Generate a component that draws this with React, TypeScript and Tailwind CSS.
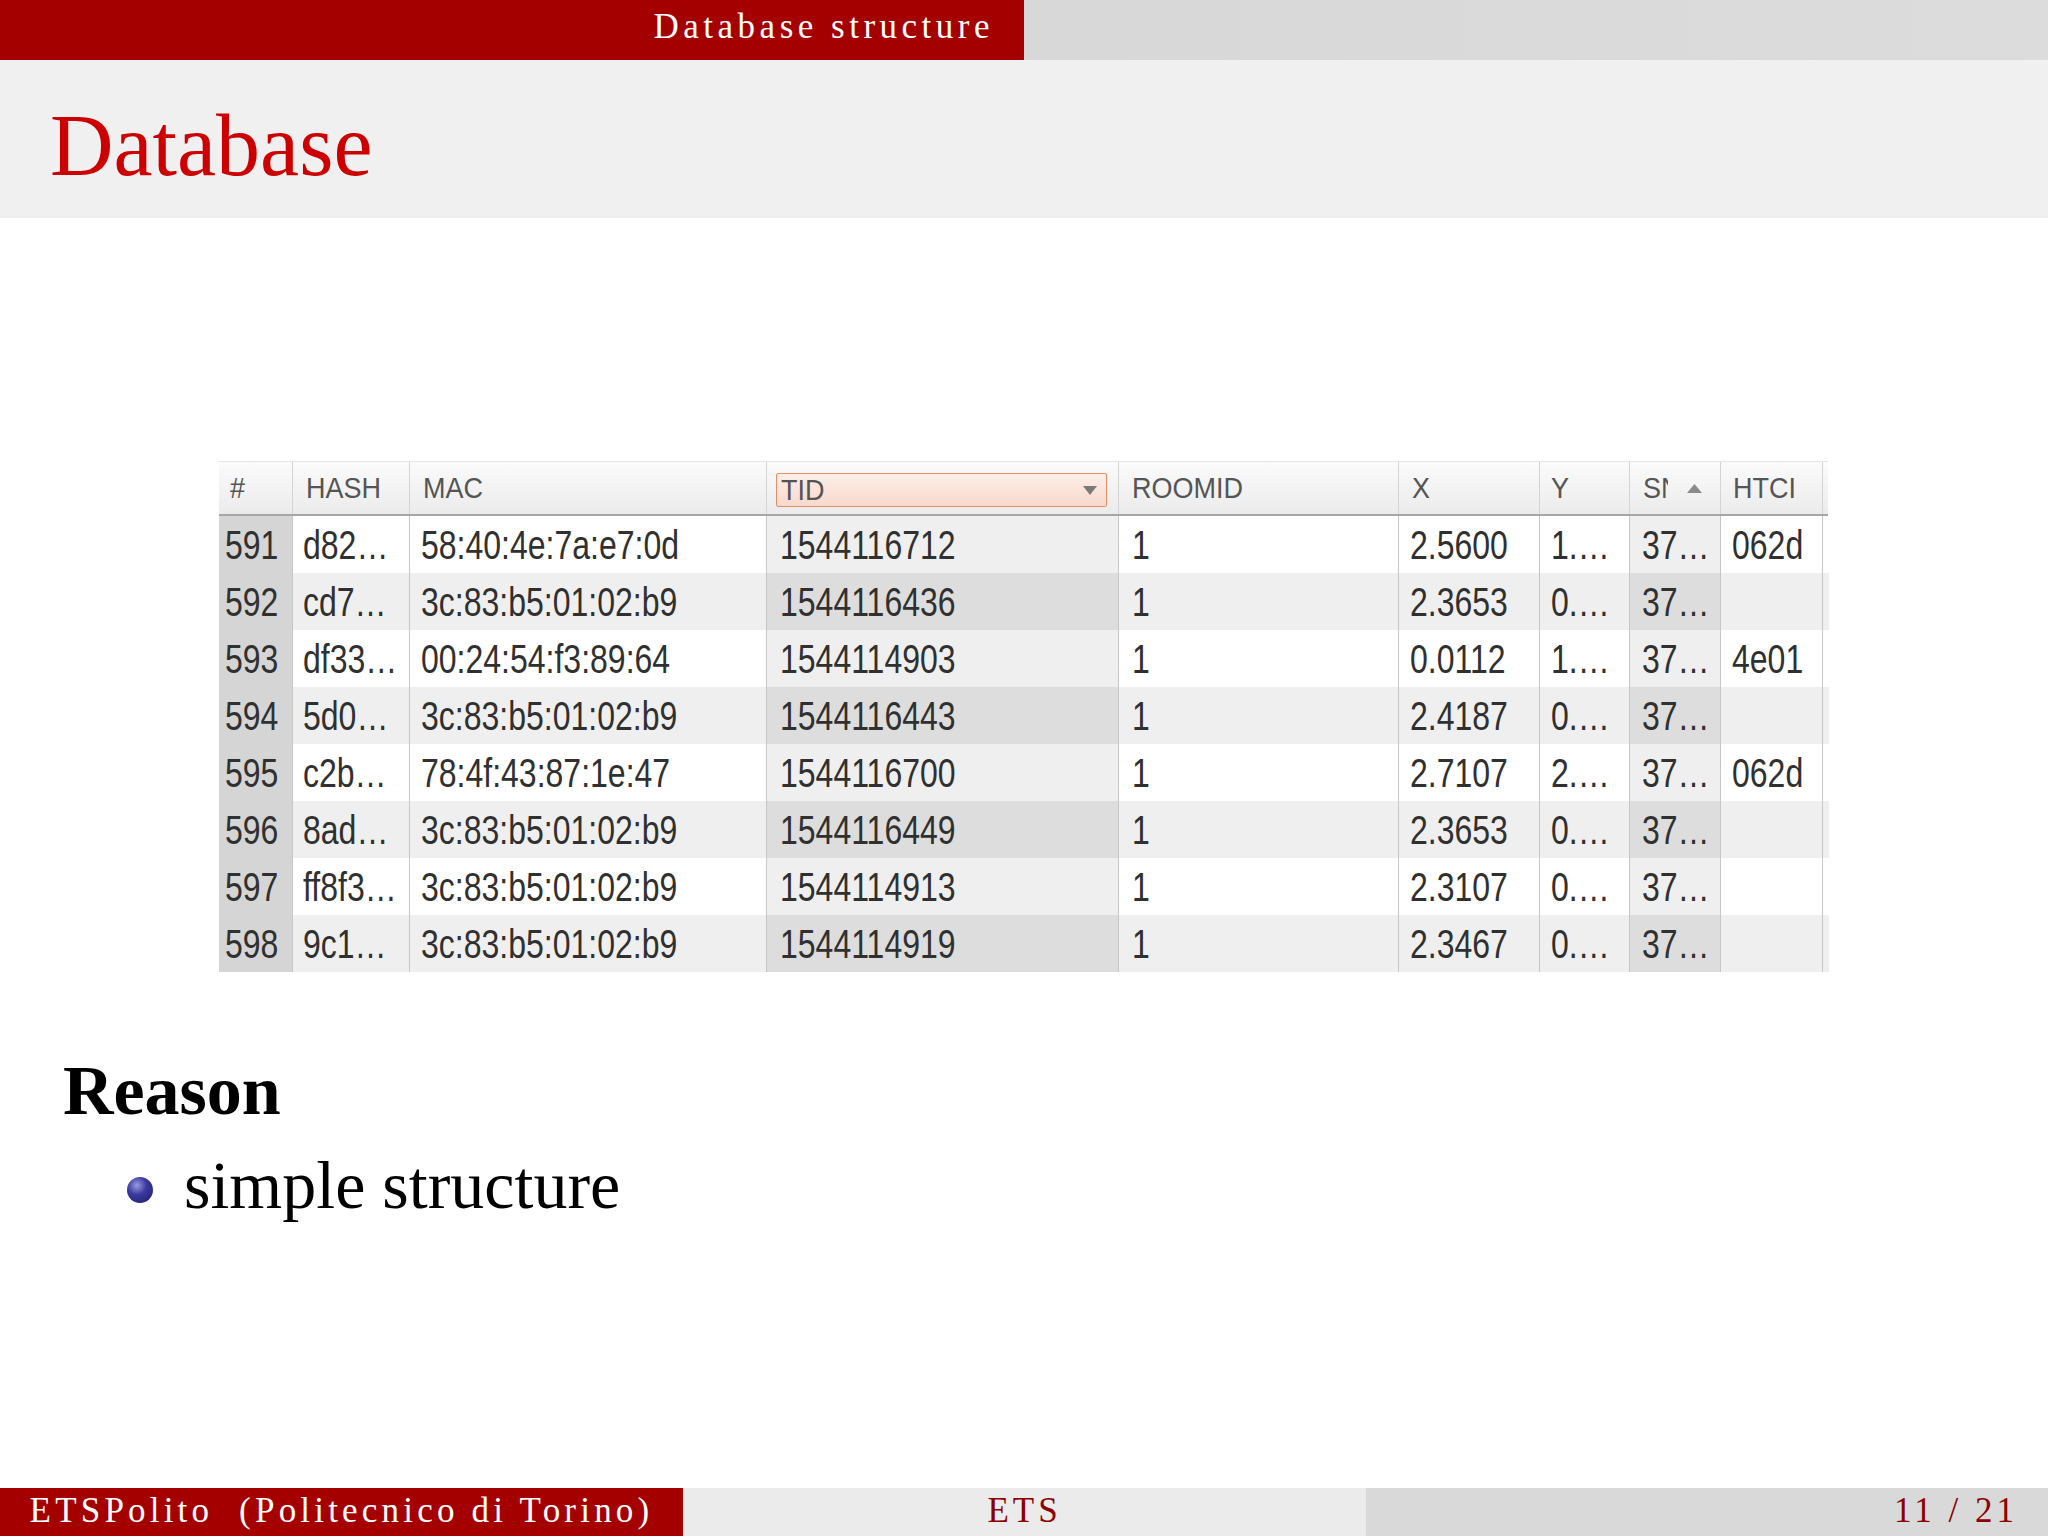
import React from "react";

type ColType = "idx" | "sorted" | "normal";

const cols: { w: string; pl: string; hpl: string; type: ColType; label: string }[] = [
  { w: "w-[74px]", pl: "pl-[6px]", hpl: "pl-[11px]", type: "idx", label: "#" },
  { w: "w-[117px]", pl: "pl-[10px]", hpl: "pl-[13px]", type: "normal", label: "HASH" },
  { w: "w-[357px]", pl: "pl-[11px]", hpl: "pl-[13px]", type: "normal", label: "MAC" },
  { w: "w-[352px]", pl: "pl-[13px]", hpl: "pl-[13px]", type: "sorted", label: "TID" },
  { w: "w-[280px]", pl: "pl-[13px]", hpl: "pl-[13px]", type: "normal", label: "ROOMID" },
  { w: "w-[141px]", pl: "pl-[11px]", hpl: "pl-[13px]", type: "normal", label: "X" },
  { w: "w-[90px]", pl: "pl-[11px]", hpl: "pl-[11px]", type: "normal", label: "Y" },
  { w: "w-[91px]", pl: "pl-[12px]", hpl: "pl-[13px]", type: "sorted", label: "SN" },
  { w: "w-[102px]", pl: "pl-[11px]", hpl: "pl-[12px]", type: "normal", label: "HTCI" },
];

const rows: string[][] = [
  ["591", "d82…", "58:40:4e:7a:e7:0d", "1544116712", "1", "2.5600", "1.…", "37…", "062d"],
  ["592", "cd7…", "3c:83:b5:01:02:b9", "1544116436", "1", "2.3653", "0.…", "37…", ""],
  ["593", "df33…", "00:24:54:f3:89:64", "1544114903", "1", "0.0112", "1.…", "37…", "4e01"],
  ["594", "5d0…", "3c:83:b5:01:02:b9", "1544116443", "1", "2.4187", "0.…", "37…", ""],
  ["595", "c2b…", "78:4f:43:87:1e:47", "1544116700", "1", "2.7107", "2.…", "37…", "062d"],
  ["596", "8ad…", "3c:83:b5:01:02:b9", "1544116449", "1", "2.3653", "0.…", "37…", ""],
  ["597", "ff8f3…", "3c:83:b5:01:02:b9", "1544114913", "1", "2.3107", "0.…", "37…", ""],
  ["598", "9c1…", "3c:83:b5:01:02:b9", "1544114919", "1", "2.3467", "0.…", "37…", ""],
];

function cellBg(type: ColType, even: boolean) {
  if (type === "idx") return "bg-[#d5d5d5]";
  if (type === "sorted") return even ? "bg-[#dddddd]" : "bg-[#efefef]";
  return even ? "bg-[#efefef]" : "bg-white";
}

function HeaderCell({ c }: { c: (typeof cols)[number] }) {
  if (c.label === "TID") {
    return (
      <div className={`${c.w} h-full shrink-0 flex pl-[9px] pr-[11px] pt-[11px] pb-[7px] border-r border-[#d4d4d4]`}>
        <div className="flex-1 flex items-center justify-between pl-[4px] pr-[9px] border border-[#e78f66] rounded-[2px] bg-linear-to-b from-[#fdeee8] to-[#f8d9cc]">
          <span className="inline-block scale-y-[1.08] text-[27px] text-[#555555] leading-none">TID</span>
          <svg width="14" height="9" viewBox="0 0 14 9">
            <polygon points="0,0 14,0 7,9" fill="#7a7a7a" />
          </svg>
        </div>
      </div>
    );
  }
  if (c.label === "SN") {
    return (
      <div className={`${c.w} h-full shrink-0 flex items-center ${c.hpl} border-r border-[#d4d4d4]`}>
        <span className="inline-block scale-y-[1.08] w-[25px] overflow-hidden whitespace-nowrap text-[27px] text-[#555555] leading-none">SN</span>
        <svg className="ml-[19px]" width="15" height="9" viewBox="0 0 15 9">
          <polygon points="7.5,0 15,9 0,9" fill="#8a8a8a" />
        </svg>
      </div>
    );
  }
  return (
    <div className={`${c.w} h-full shrink-0 flex items-center ${c.hpl} border-r border-[#d4d4d4]`}>
      <span className="inline-block scale-y-[1.08] text-[27px] text-[#555555] leading-none">{c.label}</span>
    </div>
  );
}

function DataTable() {
  return (
    <div className="flex flex-col w-[1609px] font-['Liberation_Sans',Arial,sans-serif]">
      <div className="flex h-[55px] border-t border-[#e4e4e4] border-b-2 border-b-[#a6a6a6] bg-linear-to-b from-[#fbfbfb] to-[#ebebeb]">
        {cols.map((c) => (
          <HeaderCell key={c.label} c={c} />
        ))}
        <div className="w-[6px] shrink-0" />
      </div>
      {rows.map((r, ri) => {
        const even = ri % 2 === 1;
        return (
          <div key={ri} className="flex h-[57px]">
            {cols.map((c, ci) => (
              <div
                key={ci}
                className={`${c.w} ${c.pl} ${cellBg(c.type, even)} h-full shrink-0 flex items-center overflow-hidden whitespace-nowrap border-r border-[#c6c6c6]`}
              >
                <span className="inline-block scale-y-[1.28] text-[32px] leading-none text-[#303030]">{r[ci]}</span>
              </div>
            ))}
            <div className={`w-[6px] shrink-0 ${even ? "bg-[#efefef]" : "bg-white"}`} />
          </div>
        );
      })}
    </div>
  );
}

export default function App() {
  return (
    <div className="w-[2048px] h-[1536px] flex flex-col bg-white overflow-hidden font-['Liberation_Serif','Times_New_Roman',serif]">
      {/* top bar */}
      <div className="flex h-[60px] shrink-0">
        <div className="w-[1024px] bg-[#a50000] flex justify-end items-start pt-[9px] pr-[30px]">
          <span className="text-[35px] leading-none tracking-[4.5px] text-white">Database structure</span>
        </div>
        <div className="flex-1 bg-linear-to-r from-[#d8d8d8] to-[#dcdcdc]" />
      </div>

      {/* frame title */}
      <div className="h-[158px] shrink-0 bg-[#f0f0f0] pl-[50px] pt-[42px]">
        <h1 className="text-[88px] leading-none text-[#cc0000]">Database</h1>
      </div>

      {/* content */}
      <div className="flex-1 flex flex-col">
        <div className="ml-[219px] mt-[243px]">
          <DataTable />
        </div>

        <div className="ml-[63px] mt-[84px] text-[70px] font-bold leading-none text-black">Reason</div>

        <div className="ml-[127px] mt-[25px] flex items-start">
          <div className="mt-[26px] w-[26px] h-[26px] rounded-full bg-[radial-gradient(circle_at_38%_32%,#9a9ae0_0%,#3a3aa0_40%,#1c1c6a_100%)]" />
          <span className="ml-[31px] text-[68px] leading-none text-black">simple structure</span>
        </div>
      </div>

      {/* footer */}
      <div className="h-[48px] shrink-0 flex">
        <div className="w-[683px] bg-[#a50000] flex justify-center pt-[5px]">
          <span className="text-[35px] leading-none tracking-[4.2px] text-white whitespace-pre">ETSPolito  (Politecnico di Torino)</span>
        </div>
        <div className="w-[683px] bg-[#ebebeb] flex justify-center pt-[5px]">
          <span className="text-[35px] leading-none tracking-[4px] text-[#8b0000]">ETS</span>
        </div>
        <div className="flex-1 bg-[#d9d9d9] flex justify-end pt-[5px] pr-[30px]">
          <span className="text-[35px] leading-none tracking-[4px] text-[#8b0000] whitespace-pre">11 / 21</span>
        </div>
      </div>
    </div>
  );
}
